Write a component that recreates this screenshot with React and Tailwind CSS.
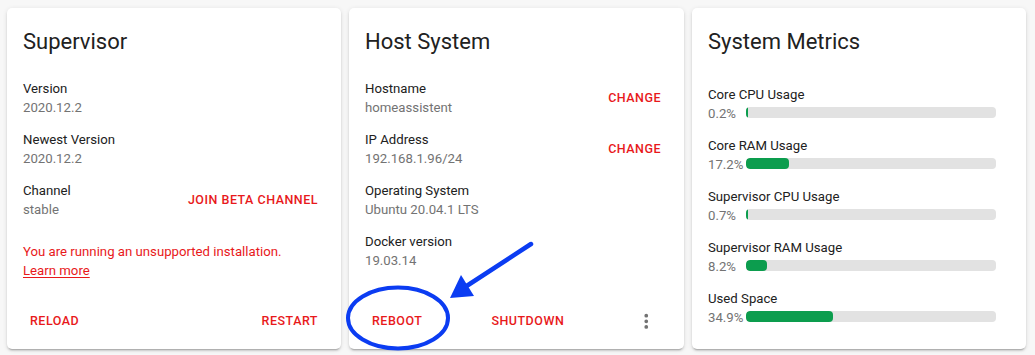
const RED = 'text-[#e8191b]';

function Card({ title, width, children, actions, contentClass = 'mt-[22px]' }) {
  return (
    <div
      className={`${width} h-[341px] flex flex-col bg-white rounded-[5px] shadow-[0_2px_2px_rgba(0,0,0,0.12),0_1px_5px_rgba(0,0,0,0.1),0_3px_1px_-2px_rgba(0,0,0,0.16)]`}
    >
      <div className="px-4 pt-[19px] text-[22px] leading-[30px] text-[#212121]">{title}</div>
      <div className={`px-4 ${contentClass}`}>{children}</div>
      {actions && <div className="mt-auto flex items-center h-9 mb-[10px] px-2">{actions}</div>}
    </div>
  );
}

function InfoRow({ label, value, action }) {
  return (
    <div className="flex items-center mb-[13px]">
      <div className="flex-1">
        <div className="text-[13.2px] leading-[19px] text-[#212121]">{label}</div>
        <div className="text-[13.2px] leading-[19px] text-[#737373]">{value}</div>
      </div>
      {action && <TextButton>{action}</TextButton>}
    </div>
  );
}

function TextButton({ children, className = 'px-[7px]' }) {
  return (
    <button
      className={`h-9 text-[12.5px] font-medium tracking-[0.5px] uppercase ${RED} ${className}`}
    >
      {children}
    </button>
  );
}

function Metric({ label, value }) {
  return (
    <div className="mb-[13px]">
      <div className="text-[13.2px] leading-[19px] text-[#212121]">{label}</div>
      <div className="flex items-center h-[19px]">
        <div className="w-[38px] text-[13.2px] leading-[19px] text-[#737373]">{value}%</div>
        <div className="w-[250px] h-[11px] mb-[3px] rounded-[4px] bg-[#e2e2e2] overflow-hidden">
          <div
            className="h-full rounded-[4px] bg-[#0c9d4e]"
            style={{ width: `${Math.max(value, 0.8)}%` }}
          />
        </div>
      </div>
    </div>
  );
}

export default function App() {
  return (
    <div
      className="relative w-[1035px] h-[355px] bg-[#f7f7f7] pt-2 pl-[7px] flex gap-2 overflow-hidden"
      style={{ fontFamily: 'Roboto, "Liberation Sans", sans-serif' }}
    >
      <Card
        title="Supervisor"
        width="w-[334px]"
        actions={
          <>
            <TextButton className="px-[15px]">Reload</TextButton>
            <TextButton className="ml-auto px-[15px]">Restart</TextButton>
          </>
        }
      >
        <InfoRow label="Version" value="2020.12.2" />
        <InfoRow label="Newest Version" value="2020.12.2" />
        <InfoRow label="Channel" value="stable" action="Join beta channel" />
        <div className={`mt-[23px] text-[13.2px] leading-[19px] ${RED}`}>
          You are running an unsupported installation.
          <br />
          <span className="underline underline-offset-2">Learn more</span>
        </div>
      </Card>

      <Card
        title="Host System"
        width="w-[335px]"
        actions={
          <>
            <TextButton className="px-[15px]">Reboot</TextButton>
            <TextButton className="ml-[39px] px-[15px]">Shutdown</TextButton>
            <button className="ml-auto mr-[18px] w-6 h-6 flex items-center justify-center text-[#727272]">
              <svg viewBox="0 0 24 24" className="w-[22.5px] h-[22.5px]" fill="currentColor">
                <path d="M12,16A2,2 0 0,1 14,18A2,2 0 0,1 12,20A2,2 0 0,1 10,18A2,2 0 0,1 12,16M12,10A2,2 0 0,1 14,12A2,2 0 0,1 12,14A2,2 0 0,1 10,12A2,2 0 0,1 12,10M12,4A2,2 0 0,1 14,6A2,2 0 0,1 12,8A2,2 0 0,1 10,6A2,2 0 0,1 12,4Z" />
              </svg>
            </button>
          </>
        }
      >
        <InfoRow label="Hostname" value="homeassistent" action="Change" />
        <InfoRow label="IP Address" value="192.168.1.96/24" action="Change" />
        <InfoRow label="Operating System" value="Ubuntu 20.04.1 LTS" />
        <InfoRow label="Docker version" value="19.03.14" />
      </Card>

      <Card title="System Metrics" width="w-[334px]" contentClass="mt-[28px]">
        <Metric label="Core CPU Usage" value={0.2} />
        <Metric label="Core RAM Usage" value={17.2} />
        <Metric label="Supervisor CPU Usage" value={0.7} />
        <Metric label="Supervisor RAM Usage" value={8.2} />
        <Metric label="Used Space" value={34.9} />
      </Card>

      {/* annotation drawn over the screenshot */}
      <svg className="absolute inset-0 pointer-events-none" width="1035" height="355">
        <ellipse cx="398" cy="318" rx="50" ry="30.5" fill="none" stroke="#0b3cf2" strokeWidth="4" />
        <line x1="531" y1="244" x2="462" y2="289" stroke="#0b3cf2" strokeWidth="4.5" strokeLinecap="round" />
        <polygon points="450,298 461,275 474,296" fill="#0b3cf2" />
      </svg>
    </div>
  );
}
